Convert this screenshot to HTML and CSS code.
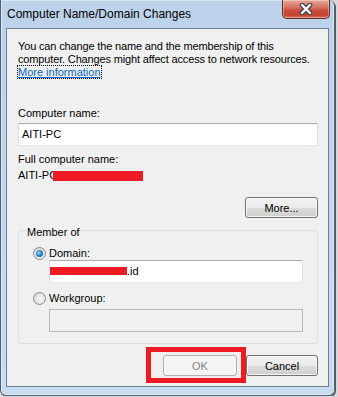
FILE: index.html
```html
<!DOCTYPE html>
<html lang="en">
<head>
  <meta charset="UTF-8" />
  <title>Computer Name/Domain Changes</title>
  <link rel="stylesheet" href="styles.css">
</head>
<body>
  <div class="window">
    <div class="titlebar">
      <span class="title">Computer Name/Domain Changes</span>
      <div class="close">
        <svg width="14" height="12" viewBox="0 0 14 12">
          <path d="M3 2 L11 10 M11 2 L3 10" stroke="#404448" stroke-width="4.6" stroke-linecap="round" fill="none" />
          <path d="M3 2 L11 10 M11 2 L3 10" stroke="#ffffff" stroke-width="2.4" stroke-linecap="round" fill="none" />
        </svg>
      </div>
    </div>

    <div class="client">
      <p class="intro">You can change the name and the membership of this<br>computer. Changes might affect access to network resources.</p>
      <div class="link-line"><a class="link" href="#">More information</a></div>

      <div class="label label-first">Computer name:</div>
      <div class="textbox">AITI-PC</div>

      <div class="label label-full">Full computer name:</div>
      <div class="value">AITI-PC<span class="redact redact-name"></span></div>

      <div class="row-right">
        <button class="btn btn-more">More...</button>
      </div>

      <fieldset class="group">
        <legend>Member of</legend>
        <label class="radio-row"><span class="radio checked"></span>Domain:</label>
        <div class="textbox textbox-inset"><span class="redact redact-domain"></span>.id</div>
        <label class="radio-row radio-row-work"><span class="radio"></span>Workgroup:</label>
        <div class="textbox textbox-inset textbox-disabled"></div>
      </fieldset>

      <div class="actions">
        <button class="btn btn-ok" disabled>OK</button>
        <button class="btn btn-cancel">Cancel</button>
      </div>
    </div>
  </div>
</body>
</html>
```

FILE: styles.css
```css
* {
  box-sizing: border-box;
}
body {
  margin: 0;
  background-color: #d6d8db;
  font-family: 'Liberation Sans', Arial, sans-serif;
  font-size: 11px;
  color: #000;
}
.window {
  width: 335px;
  height: 396px;
  display: flex;
  flex-direction: column;
  background: linear-gradient(#bcd2ea, #c8dcf1);
  border: 1px solid #4f5f72;
  border-top: 0;
  border-radius: 0 6px 6px 6px;
  box-shadow: inset 0 0 0 1px rgba(255,255,255,0.45), 1px 1px 0 #5a5a5a;
}
.titlebar {
  height: 28px;
  display: flex;
  justify-content: space-between;
  align-items: flex-start;
}
.title {
  padding: 7px 0 0 6px;
  font-size: 12px;
  line-height: 14px;
}
.close {
  width: 48px;
  height: 19px;
  margin-right: 4px;
  display: flex;
  align-items: center;
  justify-content: center;
  background: linear-gradient(#e8a697 0%, #d77464 40%, #c84a36 60%, #c5432e 85%, #d9735c 100%);
  border: 1px solid #5f2c26;
  border-top: 0;
  border-radius: 0 0 5px 5px;
  box-shadow: inset 0 0 0 1px rgba(255,255,255,0.35);
}
.client {
  flex: 1;
  margin: 0 5px 8px 5px;
  padding: 11px 10px 0 11px;
  background-color: #f0f0f0;
  border: 1px solid #6c7f97;
}
.intro {
  margin: 0;
  line-height: 13px;
  letter-spacing: -0.15px;
  white-space: nowrap;
}
.link-line {
  line-height: 13px;
}
.link {
  color: #0066cc;
  text-decoration: underline;
  outline: 1px dotted #000;
}
.label {
  line-height: 14px;
}
.label-first {
  margin-top: 27px;
}
.label-full {
  margin-top: 6px;
}
.textbox {
  height: 23px;
  margin-top: 3px;
  padding: 0 3px;
  line-height: 21px;
  background-color: #fff;
  border: 1px solid #dbdfe6;
  border-top-color: #abadb3;
  border-bottom-color: #e3e9ef;
  white-space: nowrap;
}
.value {
  margin-top: 2px;
  line-height: 14px;
  white-space: nowrap;
}
.redact {
  display: inline-block;
  background-color: #ed1c24;
}
.redact-name {
  width: 90px;
  height: 10px;
  margin-left: -4px;
  vertical-align: -2px;
}
.redact-domain {
  width: 77px;
  height: 8px;
  margin-left: -3px;
  vertical-align: 0;
}
.row-right {
  margin-top: 15px;
  display: flex;
  justify-content: flex-end;
}
.btn {
  width: 73px;
  height: 21px;
  padding: 0;
  font-family: 'Liberation Sans', Arial, sans-serif;
  font-size: 11px;
  color: #000;
  background: linear-gradient(#f2f2f2 0%, #ebebeb 50%, #dddddd 50%, #cfcfcf 100%);
  border: 1px solid #707070;
  border-radius: 3px;
  box-shadow: inset 0 0 0 1px rgba(255,255,255,0.75);
}
.group {
  margin: 3px 0 0 0;
  padding: 0 14px 11px 7px;
  min-width: 0;
  border: 1px solid #d5dfe5;
  border-radius: 3px;
}
.group legend {
  padding: 4px 1px 0 1px;
  line-height: 14px;
}
.radio-row {
  display: flex;
  align-items: center;
  height: 14px;
  margin: 7px 0 0 7px;
  line-height: 14px;
}
.radio-row-work {
  margin-top: 8px;
}
.radio {
  position: relative;
  width: 13px;
  height: 13px;
  margin-right: 3px;
  border-radius: 50%;
  border: 1px solid #8a8a8a;
  background: radial-gradient(circle at 60% 60%, #f6f6f6 0%, #e2e2e2 60%, #c9c9c9 100%);
}
.radio.checked::after {
  content: '';
  position: absolute;
  left: 2px;
  top: 2px;
  width: 7px;
  height: 7px;
  border-radius: 50%;
  background: radial-gradient(circle at 40% 40%, #a9dcf9 0%, #2f86cf 45%, #0c3b78 100%);
}
.textbox-inset {
  width: 254px;
  margin-left: 23px;
  margin-top: 0;
}
.textbox-disabled {
  margin-top: 4px;
  background-color: #f0f0f0;
  border-color: #b5b9bd;
}
.actions {
  margin-top: 11px;
  display: flex;
  justify-content: flex-end;
  gap: 9px;
}
.btn-ok {
  position: relative;
  width: 74px;
  color: #838383;
  background: #f4f4f4;
  border-color: #adb2b5;
  box-shadow: none;
}
.btn-ok::after {
  content: '';
  position: absolute;
  left: -18px;
  right: -10px;
  top: -9px;
  bottom: -8px;
  border: 5px solid #ed1c24;
}
.btn-cancel {
  width: 72px;
}
```
